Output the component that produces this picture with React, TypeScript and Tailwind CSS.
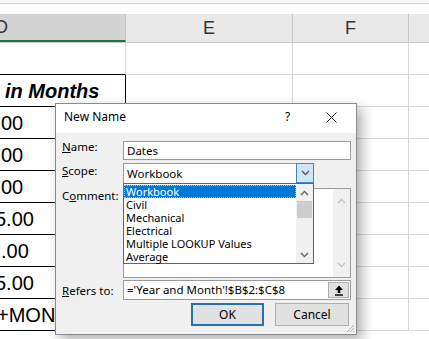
import React from "react";

const GRID = "border-[#d9d9d9]";

function ChevUp({ c }: { c: string }) {
  return (
    <svg width="9" height="6" viewBox="0 0 9 6">
      <path d="M1 5 L4.5 1.5 L8 5" stroke={c} strokeWidth="1.3" fill="none" />
    </svg>
  );
}
function ChevDown({ c }: { c: string }) {
  return (
    <svg width="9" height="6" viewBox="0 0 9 6">
      <path d="M1 1 L4.5 4.5 L8 1" stroke={c} strokeWidth="1.3" fill="none" />
    </svg>
  );
}

type Row = { text?: string; bold?: boolean; table: boolean };

const rows: Row[] = [
  { table: false },
  { text: "in Months", bold: true, table: true },
  { text: "00", table: true },
  { text: "00", table: true },
  { text: "00", table: true },
  { text: "5.00", table: true },
  { text: ".00", table: true },
  { text: "5.00", table: true },
  { text: "+MON", table: true },
];

const mlClass: Record<string, string> = {
  "in Months": "ml-[5px]",
  "00": "ml-[1px]",
  "5.00": "-ml-[5px]",
  ".00": "ml-[1px]",
  "+MON": "-ml-[3px]",
};

export default function App() {
  return (
    <div className="relative w-[429px] h-[339px] overflow-hidden bg-white font-['Liberation_Sans',sans-serif] text-black">
      {/* top strip */}
      <div className="h-[14px] bg-white">
        <div className="h-[3px] bg-[#f7f7f7]" />
        <div className="h-[1px] bg-[#d4d4d4]" />
      </div>
      {/* column header */}
      <div className="flex h-[29px] bg-[#e9e9e9] border-b border-[#c8c8c8] text-[18px] text-[#333]">
        <div className="w-[126px] flex items-center bg-[#d3d3d3] border-r border-[#c0c0c0] border-b-2 border-b-[#217346] overflow-hidden">
          <span className="-ml-[5px]">D</span>
        </div>
        <div className="w-[167px] flex items-center justify-center border-r border-[#c8c8c8]">E</div>
        <div className="w-[116px] flex items-center justify-center border-r border-[#c8c8c8]">F</div>
        <div className="flex-1" />
      </div>
      {/* rows */}
      {rows.map((r, i) => (
        <div key={i} className="flex h-[32px]">
          <div
            className={
              "w-[126px] flex items-center overflow-hidden whitespace-nowrap border-b border-r " +
              (r.table ? "border-black" : "border-b-black border-r-[#d9d9d9]")
            }
          >
            {r.text && (
              <span
                className={
                  (r.bold ? "font-bold italic text-[20px] " : "text-[20px] ") + mlClass[r.text]
                }
              >
                {r.text}
              </span>
            )}
          </div>
          <div className={"w-[167px] border-b border-r " + GRID} />
          <div className={"w-[116px] border-b border-r " + GRID} />
          <div className={"flex-1 border-b " + GRID} />
        </div>
      ))}

      {/* dialog */}
      <div className="absolute left-[55px] top-[103px] w-[302px] h-[232px] border border-[#8a8a8a] bg-[#f0f0f0] shadow-[5px_5px_12px_rgba(0,0,0,0.32)] font-['Noto_Sans',sans-serif] text-[11.5px] leading-[16px] text-black">
        {/* title */}
        <div className="h-[29px] bg-white flex items-start pt-[5px] pl-[8px]">
          <span className="text-[12px]">New Name</span>
          <span className="ml-[159px] text-[12px]">?</span>
          <svg className="ml-[36px] mt-[3px]" width="11" height="11" viewBox="0 0 11 11">
            <path d="M0.5 0.5 L10.5 10.5 M10.5 0.5 L0.5 10.5" stroke="#222" strokeWidth="1" />
          </svg>
        </div>
        {/* body */}
        <div className="flex flex-col pt-[8px] pl-[6px]">
          {/* Name */}
          <div className="flex items-start h-[19px]">
            <span className="w-[61px] -mt-[2px]">
              <span className="underline">N</span>ame:
            </span>
            <div className="w-[228px] h-[19px] border border-[#9a9a9a] bg-white pl-[3px] pt-[1px]">Dates</div>
          </div>
          {/* Scope */}
          <div className="flex items-start h-[21px] mt-[3px]">
            <span className="w-[61px]">
              <span className="underline">S</span>cope:
            </span>
            <div className="relative w-[191px] h-[21px] border border-[#9a9a9a] bg-white pl-[3px] pt-[2px]">
              Workbook
              <div className="absolute -right-[1px] -top-[1px] w-[18px] h-[20px] border border-[#3f87c4] bg-[#cfe6f8] flex items-center justify-center">
                <ChevDown c="#555" />
              </div>
            </div>
          </div>
          {/* Comment */}
          <div className="flex items-start h-[90px] mt-[4px]">
            <span className="w-[61px]">
              C<span className="underline">o</span>mment:
            </span>
            <div className="w-[228px] h-[90px] border border-[#9a9a9a] bg-white flex justify-end">
              <div className="w-[17px] h-full bg-[#f0f0f0] flex flex-col items-center justify-between py-[9px]">
                <ChevUp c="#c2c2c2" />
                <ChevDown c="#c2c2c2" />
              </div>
            </div>
          </div>
          {/* Refers */}
          <div className="flex items-start h-[20px] mt-[2px]">
            <span className="w-[61px] mt-[3px]">
              <span className="underline">R</span>efers to:
            </span>
            <div className="relative w-[228px] h-[20px] border border-[#9a9a9a] bg-white pl-[3px] pt-[1px] whitespace-nowrap">
              ='Year and Month'!$B$2:$C$8
              <div className="absolute right-[1px] top-[1px] w-[21px] h-[16px] border border-[#adadad] bg-[#e1e1e1] flex items-center justify-center">
                <svg width="10" height="11" viewBox="0 0 10 11">
                  <path d="M5 0.5 L9 5 H6.3 V8 H3.7 V5 H1 Z" fill="#000" />
                  <rect x="1" y="9.3" width="8" height="1.4" fill="#000" />
                </svg>
              </div>
            </div>
          </div>
          {/* Buttons */}
          <div className="flex h-[23px] mt-[3px] pl-[129px] gap-[11px]">
            <div className="w-[73px] h-[23px] border-2 border-[#2a6fad] bg-[#e1e1e1] flex items-center justify-center text-[12px]">
              OK
            </div>
            <div className="w-[74px] h-[23px] border border-[#adadad] bg-[#e1e1e1] flex items-center justify-center text-[12px]">
              Cancel
            </div>
          </div>
        </div>

        {/* resize grip */}
        <svg className="absolute right-[1px] bottom-[1px]" width="10" height="10" viewBox="0 0 10 10">
          <path d="M9 2 L2 9 M9 5 L5 9 M9 8 L8 9" stroke="#b5b5b5" strokeWidth="1" />
        </svg>

        {/* dropdown list */}
        <div className="absolute left-[67px] top-[79px] w-[191px] h-[81px] border border-[#646464] bg-white flex text-[11px]">
          <div className="flex-1 flex flex-col leading-[13px] pt-[1px]">
            <div className="h-[13px] bg-[#0078d7] text-white pl-[2px] outline outline-1 outline-dotted outline-[#9cc8ee] -outline-offset-1">Workbook</div>
            <div className="h-[13px] pl-[2px]">Civil</div>
            <div className="h-[13px] pl-[2px]">Mechanical</div>
            <div className="h-[13px] pl-[2px]">Electrical</div>
            <div className="h-[13px] pl-[2px]">Multiple LOOKUP Values</div>
            <div className="h-[13px] pl-[2px]">Average</div>
          </div>
          <div className="w-[17px] h-full bg-[#f0f0f0] flex flex-col">
            <div className="h-[17px] flex items-center justify-center">
              <ChevUp c="#606060" />
            </div>
            <div className="h-[17px] bg-[#cdcdcd] mx-[1px]" />
            <div className="flex-1" />
            <div className="h-[17px] flex items-center justify-center">
              <ChevDown c="#606060" />
            </div>
          </div>
        </div>
      </div>
    </div>
  );
}
